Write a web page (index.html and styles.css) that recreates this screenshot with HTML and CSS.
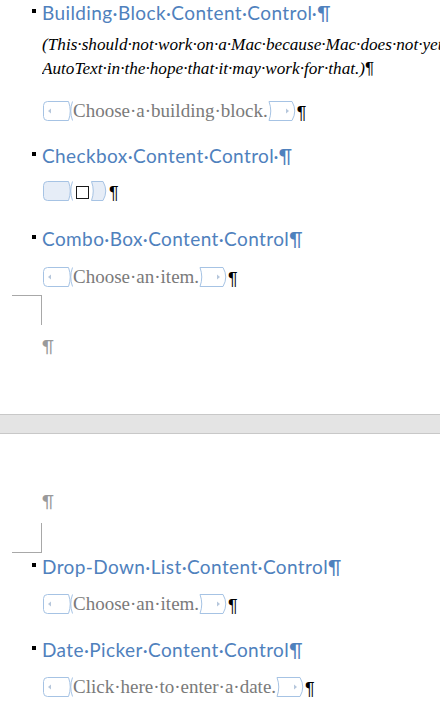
FILE: index.html
```html
<!DOCTYPE html>
<html>
<head>
<meta charset="utf-8">
<link rel="stylesheet" href="styles.css">
</head>
<body>
<div class="doc">
  <section class="page page-1">
    <h2 class="heading">Building·Block·Content·Control·¶</h2>
    <p class="note">(This·should·not·work·on·a·Mac·because·Mac·does·not·yet·understand·Building·Blocks.·Try<br>AutoText·in·the·hope·that·it·may·work·for·that.)<span class="note-mark">¶</span></p>
    <p class="ctl-row ctl-1"><span class="cc">
      <svg class="tab" width="31" height="22" viewBox="0 0 31 22"><path class="tab-shape" d="M26.5 1.5H5.5Q1.5 1.5 1.5 5.5V16.5Q1.5 20.5 5.5 20.5H26.5Q30 11 26.5 1.5Z"/><path class="tab-edge" d="M30.5 1.5Q27 11 30.5 20.5"/><path class="tab-arrow" d="M9 8.5L6 11L9 13.5Z"/></svg><span class="cc-text">Choose·a·building·block.</span><svg class="tab" width="30" height="22" viewBox="0 0 30 22"><path class="tab-shape" d="M1 1.5H24Q29.5 11 24 20.5H1Q4.5 11 1 1.5Z"/><path class="tab-arrow" d="M18 8.5L21 11L18 13.5Z"/></svg></span><span class="mark">¶</span></p>

    <h2 class="heading h-2">Checkbox·Content·Control·¶</h2>
    <p class="ctl-row ctl-check"><span class="cc">
      <svg class="tab tab-filled" width="31" height="22" viewBox="0 0 31 22"><path class="tab-shape" d="M26.5 1.5H5.5Q1.5 1.5 1.5 5.5V16.5Q1.5 20.5 5.5 20.5H26.5Q30 11 26.5 1.5Z"/><path class="tab-edge" d="M30.5 1.5Q27 11 30.5 20.5"/></svg><span class="checkbox"></span><svg class="tab tab-filled" width="19" height="22" viewBox="0 0 19 22"><path class="tab-shape" d="M1.5 1.5H13Q18.5 11 13 20.5H1.5Q5 11 1.5 1.5Z"/></svg></span><span class="mark mark-check">¶</span></p>

    <h2 class="heading h-3">Combo·Box·Content·Control¶</h2>
    <p class="ctl-row ctl-combo"><span class="cc">
      <svg class="tab" width="31" height="22" viewBox="0 0 31 22"><path class="tab-shape" d="M26.5 1.5H5.5Q1.5 1.5 1.5 5.5V16.5Q1.5 20.5 5.5 20.5H26.5Q30 11 26.5 1.5Z"/><path class="tab-edge" d="M30.5 1.5Q27 11 30.5 20.5"/><path class="tab-arrow" d="M9 8.5L6 11L9 13.5Z"/></svg><span class="cc-text">Choose·an·item.</span><svg class="tab" width="30" height="22" viewBox="0 0 30 22"><path class="tab-shape" d="M1 1.5H24Q29.5 11 24 20.5H1Q4.5 11 1 1.5Z"/><path class="tab-arrow" d="M18 8.5L21 11L18 13.5Z"/></svg></span><span class="mark">¶</span></p>

    <div class="crop crop-top"></div>
    <p class="empty-para empty-1">¶</p>
  </section>

  <div class="page-gap"></div>

  <section class="page page-2">
    <p class="empty-para empty-2">¶</p>
    <div class="crop crop-bottom"></div>

    <h2 class="heading h-4">Drop-Down·List·Content·Control¶</h2>
    <p class="ctl-row ctl-drop"><span class="cc">
      <svg class="tab" width="31" height="22" viewBox="0 0 31 22"><path class="tab-shape" d="M26.5 1.5H5.5Q1.5 1.5 1.5 5.5V16.5Q1.5 20.5 5.5 20.5H26.5Q30 11 26.5 1.5Z"/><path class="tab-edge" d="M30.5 1.5Q27 11 30.5 20.5"/><path class="tab-arrow" d="M9 8.5L6 11L9 13.5Z"/></svg><span class="cc-text">Choose·an·item.</span><svg class="tab" width="30" height="22" viewBox="0 0 30 22"><path class="tab-shape" d="M1 1.5H24Q29.5 11 24 20.5H1Q4.5 11 1 1.5Z"/><path class="tab-arrow" d="M18 8.5L21 11L18 13.5Z"/></svg></span><span class="mark">¶</span></p>

    <h2 class="heading h-5">Date·Picker·Content·Control¶</h2>
    <p class="ctl-row ctl-date"><span class="cc">
      <svg class="tab" width="31" height="22" viewBox="0 0 31 22"><path class="tab-shape" d="M26.5 1.5H5.5Q1.5 1.5 1.5 5.5V16.5Q1.5 20.5 5.5 20.5H26.5Q30 11 26.5 1.5Z"/><path class="tab-edge" d="M30.5 1.5Q27 11 30.5 20.5"/><path class="tab-arrow" d="M9 8.5L6 11L9 13.5Z"/></svg><span class="cc-text">Click·here·to·enter·a·date.</span><svg class="tab" width="30" height="22" viewBox="0 0 30 22"><path class="tab-shape" d="M1 1.5H24Q29.5 11 24 20.5H1Q4.5 11 1 1.5Z"/><path class="tab-arrow" d="M18 8.5L21 11L18 13.5Z"/></svg></span><span class="mark">¶</span></p>
  </section>
</div>
</body>
</html>
```

FILE: styles.css
```css
* { box-sizing: border-box; }
html, body { margin: 0; padding: 0; }
body {
  width: 440px;
  height: 705px;
  overflow: hidden;
  background: #ffffff;
  font-family: Lato, "Liberation Sans", sans-serif;
}
.doc { width: 440px; }
.page { padding-left: 42px; }
.page-1 { height: 414px; }

.heading {
  margin: 0;
  height: 28px;
  line-height: 25px;
  font-size: 19px;
  letter-spacing: 0.4px;
  font-weight: 400;
  color: #4f81bd;
  white-space: nowrap;
}
.heading::before {
  content: "";
  display: inline-block;
  width: 4px;
  height: 4px;
  background: #000;
  margin-left: -10px;
  margin-right: 6px;
  vertical-align: 7px;
}
.h-2 { margin-top: 21px; }
.h-3 { margin-top: 24px; }
.h-4 { margin-top: 1px; }
.h-5 { margin-top: 22px; }

.note {
  margin: 5px 0 0;
  width: 398px;
  overflow: hidden;
  font-family: "Liberation Serif", serif;
  font-style: italic;
  font-size: 17.2px;
  line-height: 24px;
  color: #000;
  white-space: nowrap;
}
.note-mark { font-style: normal; font-family: "Liberation Sans", sans-serif; font-size: 17px; }

.ctl-row {
  margin: 0;
  height: 22px;
  display: flex;
  align-items: center;
  white-space: nowrap;
}
.ctl-1 { margin-top: 19px; }
.ctl-check { margin-top: 9px; }
.ctl-combo { margin-top: 12px; }
.ctl-drop { margin-top: 11px; }
.ctl-date { margin-top: 11px; }

.cc { display: inline-flex; align-items: center; height: 22px; }
.tab { display: block; flex: none; }
.tab-shape { fill: #ffffff; stroke: #a6c3e4; stroke-width: 1; }
.tab-edge { fill: none; stroke: #a6c3e4; stroke-width: 1; }
.tab-arrow { fill: #b6c7dc; }
.tab-filled .tab-shape { fill: #e6edf7; }

.cc-text {
  font-family: "Liberation Serif", serif;
  font-size: 19px;
  line-height: 22px;
  color: #7a7a7a;
}
.checkbox {
  display: block;
  width: 13px;
  height: 13px;
  border: 1px solid #1a1a1a;
  margin: 2px 1px 0 3px;
}
.mark {
  font-family: "Liberation Sans", sans-serif;
  font-size: 18px;
  line-height: 22px;
  color: #000;
  margin-top: 3px;
  margin-left: -1px;
}
.mark-check { margin-left: 0; }

.crop { width: 30px; margin-left: -30px; }
.crop-top {
  margin-top: 7px;
  height: 30px;
  border-top: 1px solid #a8a8a8;
  border-right: 1px solid #a8a8a8;
}
.crop-bottom {
  margin-top: 10px;
  height: 30px;
  border-bottom: 1px solid #a8a8a8;
  border-right: 1px solid #a8a8a8;
}

.empty-para {
  margin: 0;
  height: 22px;
  line-height: 22px;
  font-size: 17px;
  color: #9a9a9a;
}
.empty-1 { margin-top: 11px; }
.empty-2 { margin-top: 57px; }

.page-gap {
  height: 20px;
  background: #e4e4e4;
  border-top: 1px solid #c8c8c8;
  border-bottom: 1px solid #c8c8c8;
}
```
